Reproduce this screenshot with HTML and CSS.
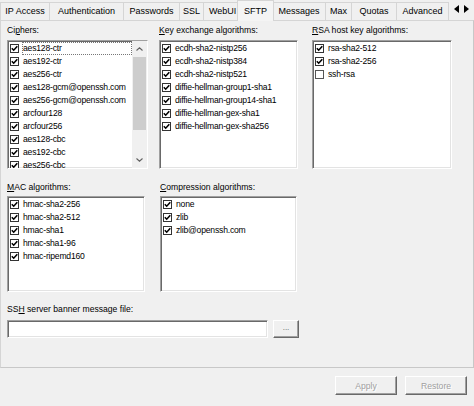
FILE: index.html
```html
<!DOCTYPE html>
<html>
<head>
<meta charset="utf-8">
<link rel="stylesheet" href="styles.css">
</head>
<body>
<div class="tabs">
  <div class="tab t-ip">IP Access</div>
  <div class="tab t-auth">Authentication</div>
  <div class="tab t-pw">Passwords</div>
  <div class="tab t-ssl">SSL</div>
  <div class="tab t-web">WebUI</div>
  <div class="tab t-sftp active">SFTP</div>
  <div class="tab t-msg">Messages</div>
  <div class="tab t-max">Max</div>
  <div class="tab t-quo">Quotas</div>
  <div class="tab t-adv">Advanced</div>
  <div class="arrows">
    <svg width="5" height="8" viewBox="0 0 5 8"><path d="M5 0 L0 4 L5 8 Z" fill="#000"/></svg>
    <svg width="5" height="8" viewBox="0 0 5 8"><path d="M0 0 L5 4 L0 8 Z" fill="#000"/></svg>
  </div>
</div>

<div class="panel">
  <div class="row row-top">
    <div class="group g-ciph">
      <div class="label">Ci<u>p</u>hers:</div>
      <div class="list list-top with-scroll">
        <div class="items">
          <div class="item focus"><span class="cb on"></span><span class="txt">aes128-ctr</span></div>
          <div class="item"><span class="cb on"></span><span class="txt">aes192-ctr</span></div>
          <div class="item"><span class="cb on"></span><span class="txt">aes256-ctr</span></div>
          <div class="item"><span class="cb on"></span><span class="txt">aes128-gcm@openssh.com</span></div>
          <div class="item"><span class="cb on"></span><span class="txt">aes256-gcm@openssh.com</span></div>
          <div class="item"><span class="cb on"></span><span class="txt">arcfour128</span></div>
          <div class="item"><span class="cb on"></span><span class="txt">arcfour256</span></div>
          <div class="item"><span class="cb on"></span><span class="txt">aes128-cbc</span></div>
          <div class="item"><span class="cb on"></span><span class="txt">aes192-cbc</span></div>
          <div class="item"><span class="cb on"></span><span class="txt">aes256-cbc</span></div>
        </div>
        <div class="scrollbar">
          <div class="sb-btn"><svg width="7" height="4" viewBox="0 0 7 4"><path d="M0.5 3.5 L3.5 0.8 L6.5 3.5" fill="none" stroke="#606060" stroke-width="1.1"/></svg></div>
          <div class="sb-thumb"></div>
          <div class="sb-track"></div>
          <div class="sb-btn"><svg width="7" height="4" viewBox="0 0 7 4"><path d="M0.5 0.5 L3.5 3.2 L6.5 0.5" fill="none" stroke="#606060" stroke-width="1.1"/></svg></div>
        </div>
      </div>
    </div>
    <div class="group g-kex">
      <div class="label"><u>K</u>ey exchange algorithms:</div>
      <div class="list list-top">
        <div class="items">
          <div class="item"><span class="cb on"></span><span class="txt">ecdh-sha2-nistp256</span></div>
          <div class="item"><span class="cb on"></span><span class="txt">ecdh-sha2-nistp384</span></div>
          <div class="item"><span class="cb on"></span><span class="txt">ecdh-sha2-nistp521</span></div>
          <div class="item"><span class="cb on"></span><span class="txt">diffie-hellman-group1-sha1</span></div>
          <div class="item"><span class="cb on"></span><span class="txt">diffie-hellman-group14-sha1</span></div>
          <div class="item"><span class="cb on"></span><span class="txt">diffie-hellman-gex-sha1</span></div>
          <div class="item"><span class="cb on"></span><span class="txt">diffie-hellman-gex-sha256</span></div>
        </div>
      </div>
    </div>
    <div class="group g-rsa">
      <div class="label"><u>R</u>SA host key algorithms:</div>
      <div class="list list-top">
        <div class="items">
          <div class="item"><span class="cb on"></span><span class="txt">rsa-sha2-512</span></div>
          <div class="item"><span class="cb on"></span><span class="txt">rsa-sha2-256</span></div>
          <div class="item"><span class="cb"></span><span class="txt">ssh-rsa</span></div>
        </div>
      </div>
    </div>
  </div>

  <div class="row row-mid">
    <div class="group g-mac">
      <div class="label"><u>M</u>AC algorithms:</div>
      <div class="list list-mid">
        <div class="items">
          <div class="item"><span class="cb on"></span><span class="txt">hmac-sha2-256</span></div>
          <div class="item"><span class="cb on"></span><span class="txt">hmac-sha2-512</span></div>
          <div class="item"><span class="cb on"></span><span class="txt">hmac-sha1</span></div>
          <div class="item"><span class="cb on"></span><span class="txt">hmac-sha1-96</span></div>
          <div class="item"><span class="cb on"></span><span class="txt">hmac-ripemd160</span></div>
        </div>
      </div>
    </div>
    <div class="group g-comp">
      <div class="label"><u>C</u>ompression algorithms:</div>
      <div class="list list-mid">
        <div class="items">
          <div class="item"><span class="cb on"></span><span class="txt">none</span></div>
          <div class="item"><span class="cb on"></span><span class="txt">zlib</span></div>
          <div class="item"><span class="cb on"></span><span class="txt">zlib@openssh.com</span></div>
        </div>
      </div>
    </div>
  </div>

  <div class="banner">
    <div class="label">SS<u>H</u> server banner message file:</div>
    <div class="file-row">
      <div class="input"></div>
      <div class="btn small">...</div>
    </div>
  </div>
</div>

<div class="footer">
  <div class="btn wide disabled">Apply</div>
  <div class="btn wide disabled">Restore</div>
</div>
</body>
</html>
```

FILE: styles.css
```css
* { box-sizing: border-box; }

body {
  margin: 0;
  width: 474px;
  height: 406px;
  overflow: hidden;
  background: #f0f0f0;
  font-family: "Liberation Sans", Arial, sans-serif;
  font-size: 8.6px;
  color: #000;
}

/* ---- tabs ---- */
.tabs {
  display: flex;
  align-items: flex-end;
  height: 20px;
}
.tab {
  height: 18px;
  line-height: 16px;
  font-size: 9px;
  text-align: center;
  white-space: nowrap;
  background: #f0f0f0;
  border: 1px solid #d5d5d5;
  border-bottom: none;
  border-right: none;
}
.t-ip { width: 49px; }
.t-auth { width: 74px; }
.t-pw { width: 56px; }
.t-ssl { width: 24px; }
.t-web { width: 36px; text-align: left; padding-left: 5px; overflow: hidden; }
.t-sftp { width: 33px; }
.t-msg { width: 53px; }
.t-max { width: 26px; }
.t-quo { width: 45px; }
.t-adv { width: 53px; border-right: 1px solid #d5d5d5; }

.tab.active {
  position: relative;
  z-index: 1;
  width: 37px;
  height: 21px;
  line-height: 20px;
  margin: 0 -2px -1px;
  border-right: 1px solid #d5d5d5;
  background: #f4f4f4;
}

.arrows {
  display: flex;
  gap: 5px;
  align-items: center;
  height: 20px;
  padding-left: 5px;
  padding-bottom: 2px;
}

/* ---- panel ---- */
.panel {
  height: 348px;
  border: 1px solid #d5d5d5;
  border-right-color: #c8c8c8;
  border-bottom-color: #c8c8c8;
  padding: 3px 0 0 6px;
}

.row { display: flex; }
.row-top { margin-bottom: 12px; }
.row-mid { margin-bottom: 11px; }

.g-ciph { width: 141px; margin-right: 11px; }
.g-kex { width: 139px; margin-right: 14px; }
.g-rsa { width: 140px; }
.g-mac { width: 138px; margin-right: 15px; }
.g-comp { width: 137px; }

.label {
  height: 12px;
  line-height: 12px;
  white-space: nowrap;
  margin-bottom: 4px;
}
.row-mid .label { margin-bottom: 3px; }
.label u { text-decoration-thickness: 1px; text-underline-offset: 1px; }

/* ---- list boxes ---- */
.list {
  display: flex;
  background: #fff;
  border: 1px solid;
  border-color: #a0a0a0 #ffffff #ffffff #a0a0a0;
  box-shadow: inset 1px 1px 0 #696969, inset -1px -1px 0 #e3e3e3;
  overflow: hidden;
}
.list-top { height: 129px; }
.list-mid { height: 96px; }

.items {
  flex: 1;
  min-width: 0;
  padding: 1px 0 0 1px;
  overflow: hidden;
}
.item {
  display: flex;
  align-items: center;
  height: 13px;
  white-space: nowrap;
  padding-left: 1px;
}
.cb {
  flex: none;
  width: 9px;
  height: 9px;
  margin-right: 3px;
  border: 1px solid #333;
  background: #fff;
}
.cb.on {
  background: #fff url("data:image/svg+xml,%3Csvg xmlns='http://www.w3.org/2000/svg' width='7' height='7' viewBox='0 0 7 7'%3E%3Cpath d='M0.8 3.3 L2.7 5.2 L6.3 1.3' fill='none' stroke='%23000' stroke-width='1.6'/%3E%3C/svg%3E") center / 7px 7px no-repeat;
}
.item:not(:has(.on)) .cb { border-color: #555; }
.txt {
  flex: 1;
  padding-left: 1px;
  line-height: 12px;
  height: 13px;
  letter-spacing: -0.2px;
}
.item.focus .txt { outline: 1px dotted #777; outline-offset: -1px; }

/* ---- scrollbar ---- */
.scrollbar {
  flex: none;
  width: 15px;
  display: flex;
  flex-direction: column;
  background: #f0f0f0;
}
.sb-btn {
  height: 16px;
  display: flex;
  align-items: center;
  justify-content: center;
}
.sb-thumb {
  height: 73px;
  margin: 0 1px;
  background: #cdcdcd;
}
.sb-track { flex: 1; }

/* ---- banner ---- */
.banner .label { margin-bottom: 5px; }
.file-row {
  display: flex;
  gap: 5px;
  align-items: flex-start;
}
.input {
  width: 261px;
  height: 18px;
  background: #fff;
  border: 1px solid;
  border-color: #a0a0a0 #ffffff #ffffff #a0a0a0;
  box-shadow: inset 1px 1px 0 #696969, inset -1px -1px 0 #e3e3e3;
}

/* ---- buttons ---- */
.btn {
  display: flex;
  align-items: center;
  justify-content: center;
  background: #f0f0f0;
  border: 1px solid;
  border-color: #ffffff #696969 #696969 #ffffff;
  box-shadow: inset -1px -1px 0 #a0a0a0;
  color: #333;
}
.btn.small {
  width: 26px;
  height: 18px;
  font-size: 8px;
  padding-bottom: 3px;
  color: #555;
}
.btn.wide {
  width: 62px;
  height: 19px;
}
.btn.disabled {
  color: #a0a0a0;
  text-shadow: 1px 1px 0 #fff;
}

.footer {
  display: flex;
  justify-content: flex-end;
  gap: 8px;
  padding: 8px 7px 0 0;
}
```
